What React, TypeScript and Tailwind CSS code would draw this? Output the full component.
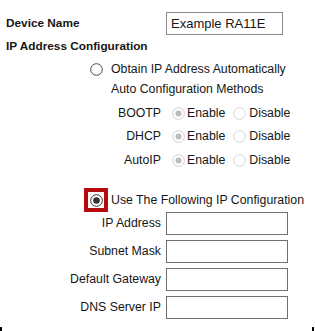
import React from 'react';

type RadioKind = 'off' | 'on' | 'disabledOn' | 'disabledOff';

const Radio: React.FC<{ kind: RadioKind }> = ({ kind }) => {
  const ring =
    kind === 'off' ? '#4a4a4a' : kind === 'on' ? '#333333' : kind === 'disabledOn' ? '#cfcfcf' : '#d6d6d6';
  return (
    <svg width="13" height="13" viewBox="0 0 13 13" className="shrink-0">
      <circle cx="6.5" cy="6.5" r="5.8" fill="#ffffff" stroke={ring} strokeWidth="1" />
      {kind === 'on' && <circle cx="6.5" cy="6.5" r="3.3" fill="#333333" />}
      {kind === 'disabledOn' && <circle cx="6.5" cy="6.5" r="3" fill="#bdbdbd" />}
    </svg>
  );
};

const MethodRow: React.FC<{ label: string; className: string }> = ({ label, className }) => (
  <div className={`flex items-center ${className}`}>
    <span className="w-[161px] text-right">{label}</span>
    <span className="ml-[11px]">
      <Radio kind="disabledOn" />
    </span>
    <span className="ml-[2px]">Enable</span>
    <span className="ml-[8px]">
      <Radio kind="disabledOff" />
    </span>
    <span className="ml-[3px]">Disable</span>
  </div>
);

const FieldRow: React.FC<{ label: string; className?: string }> = ({ label, className = '' }) => (
  <div className={`flex items-center h-[23px] ${className}`}>
    <span className="w-[161px] text-right">{label}</span>
    <div className="ml-[5px] w-[122px] h-[23px] border border-[#6f6f6f] bg-white" />
  </div>
);

export default function App() {
  return (
    <div
      className="relative w-[315px] h-[331px] overflow-hidden bg-white text-[12.3px] text-[#161616]"
      style={{ fontFamily: '"Liberation Sans", Arial, sans-serif' }}
    >
      <div className="flex flex-col pt-[12px]">
        <div className="flex items-center h-[23px]">
          <span className="w-[166px] pl-[6px] font-bold text-[11.8px]">Device Name</span>
          <div className="w-[117px] h-[23px] border border-[#8a8a8a] flex items-center pl-[4px] text-[13px]">
            Example RA11E
          </div>
        </div>

        <div className="flex items-center h-[22px] mt-[1px] pl-[6px] font-bold text-[11.8px]">
          IP Address Configuration
        </div>

        <div className="flex items-center h-[22px]">
          <span className="ml-[90px]">
            <Radio kind="off" />
          </span>
          <span className="ml-[8px]">Obtain IP Address Automatically</span>
        </div>

        <div className="flex items-center h-[19px] pl-[111px]">Auto Configuration Methods</div>

        <MethodRow label="BOOTP" className="h-[24px] mt-[2px]" />
        <MethodRow label="DHCP" className="h-[23px]" />
        <MethodRow label="AutoIP" className="h-[24px]" />

        <div className="flex items-center h-[24px] mt-[16px]">
          <div className="ml-[84px] w-[24px] h-[24px] border-[4px] border-[#b40c0c] bg-white flex items-center justify-center">
            <Radio kind="on" />
          </div>
          <span className="ml-[3px]">Use The Following IP Configuration</span>
        </div>

        <FieldRow label="IP Address" />
        <FieldRow label="Subnet Mask" className="mt-[5px]" />
        <FieldRow label="Default Gateway" className="mt-[5px]" />
        <FieldRow label="DNS Server IP" className="mt-[5px]" />

        <div className="mt-[8px] h-[4px] mx-0 flex justify-between">
          <div className="w-[2px] h-[4px] bg-black" />
          <div className="w-[2px] h-[4px] bg-black mr-[1px]" />
        </div>
      </div>
    </div>
  );
}
